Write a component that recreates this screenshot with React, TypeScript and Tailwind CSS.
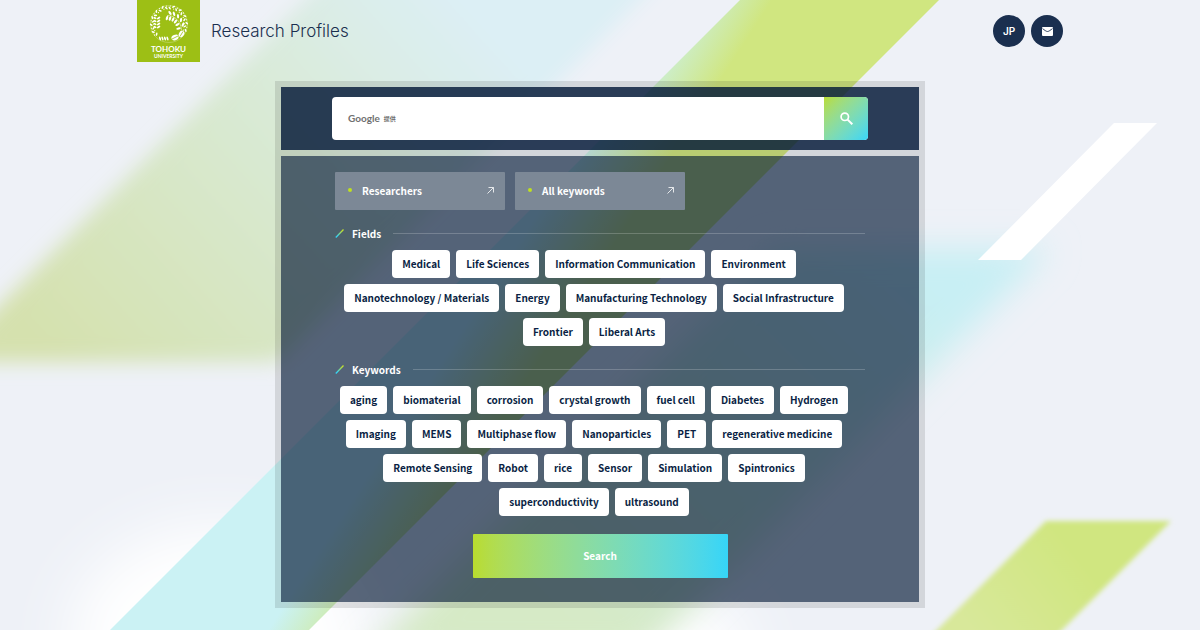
import { useState } from "react";
import type { FormEvent } from "react";

const FIELDS = [
  "Medical",
  "Life Sciences",
  "Information Communication",
  "Environment",
  "Nanotechnology / Materials",
  "Energy",
  "Manufacturing Technology",
  "Social Infrastructure",
  "Frontier",
  "Liberal Arts",
];

const KEYWORDS = [
  "aging",
  "biomaterial",
  "corrosion",
  "crystal growth",
  "fuel cell",
  "Diabetes",
  "Hydrogen",
  "Imaging",
  "MEMS",
  "Multiphase flow",
  "Nanoparticles",
  "PET",
  "regenerative medicine",
  "Remote Sensing",
  "Robot",
  "rice",
  "Sensor",
  "Simulation",
  "Spintronics",
  "superconductivity",
  "ultrasound",
];

/** Slanted colour bands behind the page. */
function Backdrop() {
  return (
    <svg
      className="absolute inset-0 -z-10 h-full w-full"
      viewBox="0 0 1200 630"
      preserveAspectRatio="xMidYMid slice"
      aria-hidden="true"
    >
      <defs>
        <linearGradient id="mist" gradientUnits="userSpaceOnUse" x1="60" y1="360" x2="460" y2="0">
          <stop offset="0" stopColor="#d5e1ae" />
          <stop offset="0.6" stopColor="#d9ead6" />
          <stop offset="1" stopColor="#dceff5" />
        </linearGradient>
        <linearGradient id="band" gradientUnits="userSpaceOnUse" x1="478" y1="306" x2="546" y2="350">
          <stop offset="0" stopColor="#cbf2f4" />
          <stop offset="1" stopColor="#d0e680" />
        </linearGradient>
        <linearGradient id="lagoon" gradientUnits="userSpaceOnUse" x1="940" y1="300" x2="600" y2="640">
          <stop offset="0" stopColor="#c8eff4" />
          <stop offset="0.7" stopColor="#d2ead2" />
          <stop offset="1" stopColor="#d6eac6" />
        </linearGradient>
        <linearGradient id="leaf" gradientUnits="userSpaceOnUse" x1="980" y1="640" x2="1080" y2="560">
          <stop offset="0" stopColor="#d8e89a" />
          <stop offset="1" stopColor="#d0e680" />
        </linearGradient>
        <filter id="blur-sm" x="-20%" y="-20%" width="140%" height="140%">
          <feGaussianBlur stdDeviation="2.5" />
        </filter>
        <filter id="blur-md" x="-20%" y="-20%" width="140%" height="140%">
          <feGaussianBlur stdDeviation="10" />
        </filter>
        <filter id="blur-lg" x="-20%" y="-20%" width="140%" height="140%">
          <feGaussianBlur stdDeviation="16" />
        </filter>
        <filter id="blur-xl" x="-50%" y="-50%" width="200%" height="200%">
          <feGaussianBlur stdDeviation="30" />
        </filter>
      </defs>
      <ellipse cx="220" cy="640" rx="150" ry="115" fill="#fff" filter="url(#blur-xl)" />
      <ellipse cx="640" cy="650" rx="110" ry="60" fill="#fff" filter="url(#blur-xl)" />
      <path d="M345-40H680L278 362H-57z" fill="url(#mist)" filter="url(#blur-md)" />
      <path d="M775 248H1052L640 660H363z" fill="url(#lagoon)" filter="url(#blur-lg)" />
      <path d="M740 0H939L309 630H110z" fill="url(#band)" />
      <path d="M1114 123H1157L1021 260H978z" fill="#fff" />
      <path d="M1046 521H1171L1032 660H907z" fill="url(#leaf)" filter="url(#blur-sm)" />
    </svg>
  );
}

const OUTER_LEAVES = Array.from({ length: 30 }, (_, i) => i * 12).filter((a) => a < 115 || a > 225);

function Emblem() {
  return (
    <svg className="mt-1 h-[41px] w-[42px]" viewBox="0 0 42 41" fill="#fff" aria-hidden="true">
      <circle cx="21" cy="20" r="18.5" fill="none" stroke="#fff" strokeOpacity="0.5" strokeWidth="0.5" />
      {OUTER_LEAVES.map((angle, i) => (
        <g key={angle} transform={`rotate(${angle} 21 20)`}>
          <ellipse
            cx="21"
            cy={i % 2 ? 1.8 : 4.2}
            rx="0.8"
            ry="1.7"
            transform={`rotate(${i % 2 ? 50 : -35} 21 3)`}
          />
          <circle cx="22.4" cy={i % 2 ? 4.4 : 2} r="0.6" />
        </g>
      ))}
      {/* left sprig */}
      {[14, 17, 20, 23].map((y) => (
        <g key={y}>
          <ellipse cx="7" cy={y} rx="1.7" ry="0.8" transform={`rotate(30 7 ${y})`} />
          <ellipse cx="10.6" cy={y} rx="1.9" ry="1" transform={`rotate(-32 10.6 ${y})`} />
        </g>
      ))}
      {/* sprig that runs from the top to the right */}
      <path d="M19 11.5C26 11 33 17 33.5 26" fill="none" stroke="#fff" strokeWidth="0.5" />
      {[
        [19, 14, 110],
        [22, 14.5, 110],
        [25, 15.5, 118],
        [27.5, 17.5, 130],
        [29.5, 20.5, 150],
        [30.5, 24.5, 165],
        [22, 9, 55],
        [26, 9.8, 70],
        [30, 12.2, 85],
        [33, 16, 100],
        [35, 20.5, 115],
      ].map(([x, y, r]) => (
        <ellipse key={`${x}-${y}`} cx={x} cy={y} rx="2.3" ry="1.1" transform={`rotate(${r} ${x} ${y})`} />
      ))}
      {/* seeds */}
      <ellipse cx="33.5" cy="30" rx="2.6" ry="3.5" transform="rotate(30 33.5 30)" />
      <ellipse cx="27" cy="33.5" rx="3.7" ry="2.7" transform="rotate(-25 27 33.5)" />
      <path d="M32 32.5 35 27.5M24 35 30 32" stroke="#9dbf15" strokeWidth="0.8" />
      {[12, 14.5, 17, 19.5].map((x) => (
        <ellipse key={x} cx={x} cy="34.5" rx="0.9" ry="2" transform={`rotate(-18 ${x} 34.5)`} />
      ))}
    </svg>
  );
}

function Header() {
  return (
    <header className="mx-auto flex h-[62px] w-full max-w-[926px] items-center justify-between">
      <a href="#top" className="flex items-center gap-[11px]">
        <span className="flex h-[62px] w-[63px] flex-col items-center bg-[#9dbf15] text-center font-['Lato',sans-serif] font-bold text-white">
          <Emblem />
          <span className="text-[8px] leading-[9px]">TOHOKU</span>
          <span className="text-[5px] leading-[5px]">UNIVERSITY</span>
        </span>
        <span className="pt-0.5 font-['Inter',sans-serif] text-[17px] font-light text-[#1a2f4f]">
          Research Profiles
        </span>
      </a>
      <nav className="flex gap-[6px]">
        <a
          href="#jp"
          className="flex h-8 w-8 items-center justify-center rounded-full bg-[#1a2f4f] font-['Inter',sans-serif] text-[10px] font-semibold text-white"
        >
          JP
        </a>
        <a
          href="#contact"
          aria-label="Contact"
          className="flex h-8 w-8 items-center justify-center rounded-full bg-[#1a2f4f]"
        >
          <svg className="h-[9px] w-[11px]" viewBox="0 0 11 9" aria-hidden="true">
            <rect width="11" height="9" rx="1" fill="#fff" />
            <path d="M0.5 1.6C2.5 3 4 4.5 5.5 4.5S8.5 3 10.5 1.6" fill="none" stroke="#1a2f4f" strokeWidth="0.9" />
          </svg>
        </a>
      </nav>
    </header>
  );
}

function PageLink({ label, href }: { label: string; href: string }) {
  return (
    <a
      href={href}
      className="flex h-[38px] w-[170px] items-center rounded-[1px] bg-[#7c8896] pr-[11px] pb-0.5 pl-[13px] text-[10px] font-bold text-white"
    >
      <span className="mr-[10px] h-1 w-1 rounded-full bg-[#bfe01f]" />
      <span className="flex-1">{label}</span>
      <svg className="h-[7px] w-[7px]" viewBox="0 0 7 7" fill="none" stroke="#fff" strokeWidth="0.8" aria-hidden="true">
        <path d="M0.5 6.5 6.3 0.7M1.5 0.5H6.5V5.5" />
      </svg>
    </a>
  );
}

function TagGroup({
  title,
  tags,
  selected,
  onToggle,
}: {
  title: string;
  tags: string[];
  selected: string[];
  onToggle: (tag: string) => void;
}) {
  return (
    <section className="mt-3.5">
      <h2 className="flex h-5 items-center pb-0.5 text-[10px] font-bold text-white">
        <svg className="mr-2 h-[9px] w-[9px]" viewBox="0 0 9 9" aria-hidden="true">
          <defs>
            <linearGradient id={`slash-${title}`} x1="0" y1="1" x2="1" y2="0">
              <stop offset="0.2" stopColor="#35d5f5" />
              <stop offset="0.8" stopColor="#c0e030" />
            </linearGradient>
          </defs>
          <path d="M0.8 8.5 8.5 0.5" stroke={`url(#slash-${title})`} strokeWidth="1.3" />
        </svg>
        {title}
        <span className="ml-3 h-px flex-1 bg-white/20" />
      </h2>
      <ul className="mt-1.5 flex flex-wrap justify-center gap-1.5 pr-3">
        {tags.map((tag) => (
          <li key={tag}>
            <button
              type="button"
              aria-pressed={selected.includes(tag)}
              onClick={() => onToggle(tag)}
              className="block h-7 rounded-[4px] bg-white px-[10px] pb-0.5 text-[10px] font-bold text-[#0a1f44] aria-pressed:bg-[#e2f3a8]"
            >
              {tag}
            </button>
          </li>
        ))}
      </ul>
    </section>
  );
}

export default function App() {
  const [query, setQuery] = useState("");
  const [selected, setSelected] = useState<string[]>([]);

  function toggle(tag: string) {
    setSelected((prev) => (prev.includes(tag) ? prev.filter((x) => x !== tag) : [...prev, tag]));
  }

  function submit(event: FormEvent) {
    event.preventDefault();
  }

  return (
    <div className="relative isolate min-h-screen overflow-hidden bg-[#eef1f7] pb-[22px] font-['Noto_Sans_CJK_JP',sans-serif]">
      <Backdrop />
      <Header />
      <main className="mx-auto mt-[19px] flex max-w-[650px] flex-col gap-1.5 bg-black/11 p-1.5">
        <form onSubmit={submit} className="bg-[#001536]/80 py-2.5">
          <div className="mx-auto flex h-[43px] max-w-[536px] overflow-hidden rounded-[4px] bg-white">
            <label
              htmlFor="site-search"
              className="flex items-center gap-1 pl-4 font-['Lato','Noto_Sans_CJK_JP',sans-serif] text-[10px] font-bold text-[#707070]"
            >
              Google <span className="text-[6px]">提供</span>
            </label>
            <input
              id="site-search"
              type="text"
              value={query}
              onChange={(e) => setQuery(e.target.value)}
              className="min-w-0 flex-1 px-2 text-[12px] text-[#0a1f44] outline-none"
            />
            <button
              type="submit"
              aria-label="Search site"
              className="flex w-11 items-center justify-center bg-linear-135 from-[#b9dc2d] to-[#35d5f8]"
            >
              <svg className="h-[13px] w-[13px]" viewBox="0 0 13 13" fill="none" stroke="#fff" aria-hidden="true">
                <circle cx="4.8" cy="4.8" r="3.7" strokeWidth="1.7" />
                <path d="M7.6 7.6 12.3 12.3" strokeWidth="2" />
              </svg>
            </button>
          </div>
        </form>
        <div className="bg-[#001536]/60 pt-4 pb-6">
          <div className="mx-auto max-w-[530px]">
            <div className="flex gap-[10px]">
              <PageLink label="Researchers" href="#researchers" />
              <PageLink label="All keywords" href="#keywords" />
            </div>
            <TagGroup title="Fields" tags={FIELDS} selected={selected} onToggle={toggle} />
            <TagGroup title="Keywords" tags={KEYWORDS} selected={selected} onToggle={toggle} />
            <button
              type="button"
              className="mx-auto mt-[18px] block h-11 w-[255px] rounded-[1px] bg-linear-to-r from-[#b9dc2d] to-[#35d5f8] pb-0.5 text-[10px] font-bold text-white"
            >
              Search
            </button>
          </div>
        </div>
      </main>
    </div>
  );
}
